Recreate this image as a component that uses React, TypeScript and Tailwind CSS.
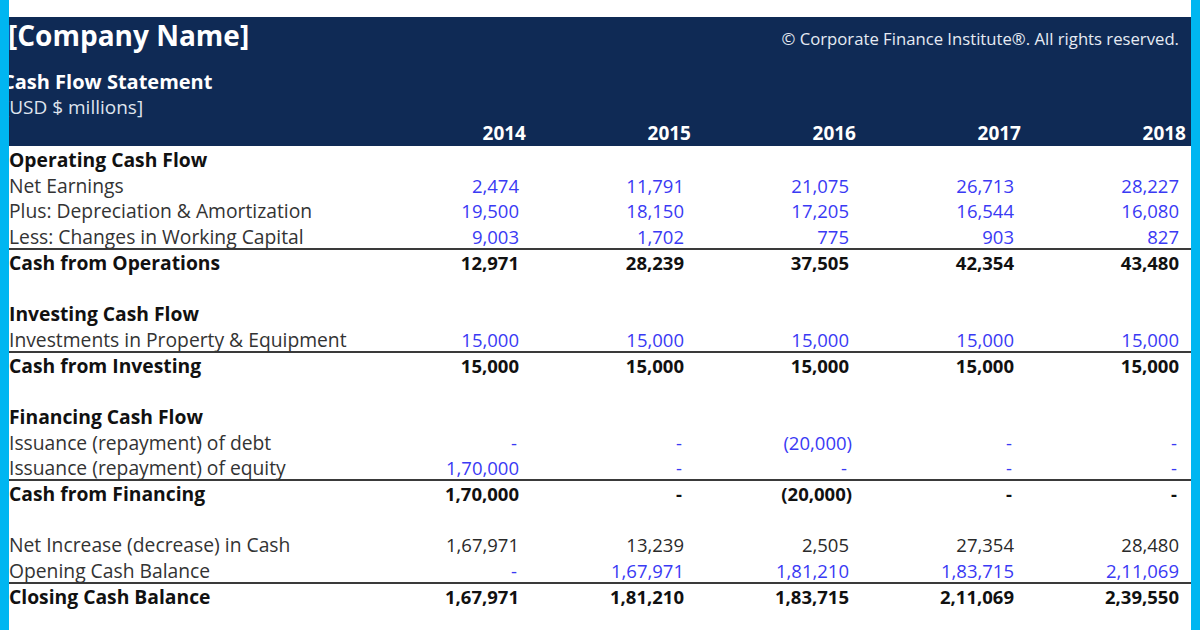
import React from 'react';

type Cell = { v: string; blue?: boolean };
type Row =
  | { kind: 'head'; label: string }
  | { kind: 'blank' }
  | { kind: 'item'; label: string; cells: Cell[]; line?: boolean }
  | { kind: 'total'; label: string; cells: Cell[] };

const b = (v: string): Cell => ({ v, blue: true });
const k = (v: string): Cell => ({ v });

const years = ['2014', '2015', '2016', '2017', '2018'];

const rows: Row[] = [
  { kind: 'head', label: 'Operating Cash Flow' },
  { kind: 'item', label: 'Net Earnings', cells: ['2,474', '11,791', '21,075', '26,713', '28,227'].map(b) },
  { kind: 'item', label: 'Plus: Depreciation & Amortization', cells: ['19,500', '18,150', '17,205', '16,544', '16,080'].map(b) },
  { kind: 'item', label: 'Less: Changes in Working Capital', cells: ['9,003', '1,702', '775', '903', '827'].map(b), line: true },
  { kind: 'total', label: 'Cash from Operations', cells: ['12,971', '28,239', '37,505', '42,354', '43,480'].map(k) },
  { kind: 'blank' },
  { kind: 'head', label: 'Investing Cash Flow' },
  { kind: 'item', label: 'Investments in Property & Equipment', cells: ['15,000', '15,000', '15,000', '15,000', '15,000'].map(b), line: true },
  { kind: 'total', label: 'Cash from Investing', cells: ['15,000', '15,000', '15,000', '15,000', '15,000'].map(k) },
  { kind: 'blank' },
  { kind: 'head', label: 'Financing Cash Flow' },
  { kind: 'item', label: 'Issuance (repayment) of debt', cells: ['-', '-', '(20,000)', '-', '-'].map(b) },
  { kind: 'item', label: 'Issuance (repayment) of equity', cells: ['1,70,000', '-', '-', '-', '-'].map(b), line: true },
  { kind: 'total', label: 'Cash from Financing', cells: ['1,70,000', '-', '(20,000)', '-', '-'].map(k) },
  { kind: 'blank' },
  { kind: 'item', label: 'Net Increase (decrease) in Cash', cells: ['1,67,971', '13,239', '2,505', '27,354', '28,480'].map(k) },
  { kind: 'item', label: 'Opening Cash Balance', cells: [b('-'), b('1,67,971'), b('1,81,210'), b('1,83,715'), b('2,11,069')], line: true },
  { kind: 'total', label: 'Closing Cash Balance', cells: ['1,67,971', '1,81,210', '1,83,715', '2,11,069', '2,39,550'].map(k) },
];

function Num({ c, bold }: { c: Cell; bold?: boolean }) {
  const paren = c.v.startsWith('(');
  return (
    <div
      className={`text-right whitespace-nowrap text-[18.5px] ${paren ? 'pr-[5px]' : c.v === '-' ? 'pr-[10px]' : 'pr-[8px]'} ${
        c.blue ? 'text-[#3a3af4]' : bold ? 'text-[#111]' : 'text-[#2a2a2a]'
      }`}
    >
      {c.v}
    </div>
  );
}

export default function App() {
  return (
    <div
      className="w-[1200px] h-[630px] bg-[#00b6f1] pl-[9px] pr-[9px] overflow-hidden"
      style={{ fontFamily: '"Open Sans", "Noto Sans", sans-serif' }}
    >
      <div className="h-full bg-white pt-[17px]">
        {/* Navy header */}
        <div className="bg-[#0f2a55] text-white h-[129px] overflow-hidden flex flex-col pr-[1px]">
          <div className="flex items-start justify-between h-[38px]">
            <div className="text-[28px] font-bold leading-[36px] -ml-[1px]">[Company Name]</div>
            <div className="text-[16.7px] text-[#e6ebf3] mt-[9px] mr-[11px]">
              © Corporate Finance Institute®. All rights reserved.
            </div>
          </div>
          <div className="text-[20px] font-bold leading-[26px] mt-[14px] -ml-[7px]">Cash Flow Statement</div>
          <div className="text-[19px] text-[#dfe4ee] leading-[25px] -ml-[6px]">[USD $ millions]</div>
          <div className="grid grid-cols-[353px_repeat(5,165px)] text-[19px] font-bold leading-[24px] mt-[1px]">
            <div />
            {years.map((y) => (
              <div key={y} className="text-right pr-[1px]">
                {y}
              </div>
            ))}
          </div>
        </div>

        {/* Table body */}
        <div className="pt-[1px] text-[19.3px]">
          {rows.map((r, i) => {
            if (r.kind === 'blank') return <div key={i} className="h-[25.7px]" />;
            if (r.kind === 'head')
              return (
                <div key={i} className="h-[25.7px] leading-[25.7px] font-bold text-[#111]">
                  {r.label}
                </div>
              );
            const bold = r.kind === 'total';
            const line = r.kind === 'item' && r.line;
            return (
              <div
                key={i}
                className={`grid grid-cols-[353px_repeat(5,165px)] items-center h-[25.7px] leading-[25.7px] ${
                  line ? 'border-b-2 border-[#3a3a3a]' : ''
                } ${bold ? 'font-bold' : ''}`}
              >
                <div className={`whitespace-nowrap ${bold ? 'text-[#111]' : 'text-[#333]'}`}>{r.label}</div>
                {r.cells.map((c, j) => (
                  <Num key={j} c={c} bold={bold} />
                ))}
              </div>
            );
          })}
        </div>
      </div>
    </div>
  );
}
